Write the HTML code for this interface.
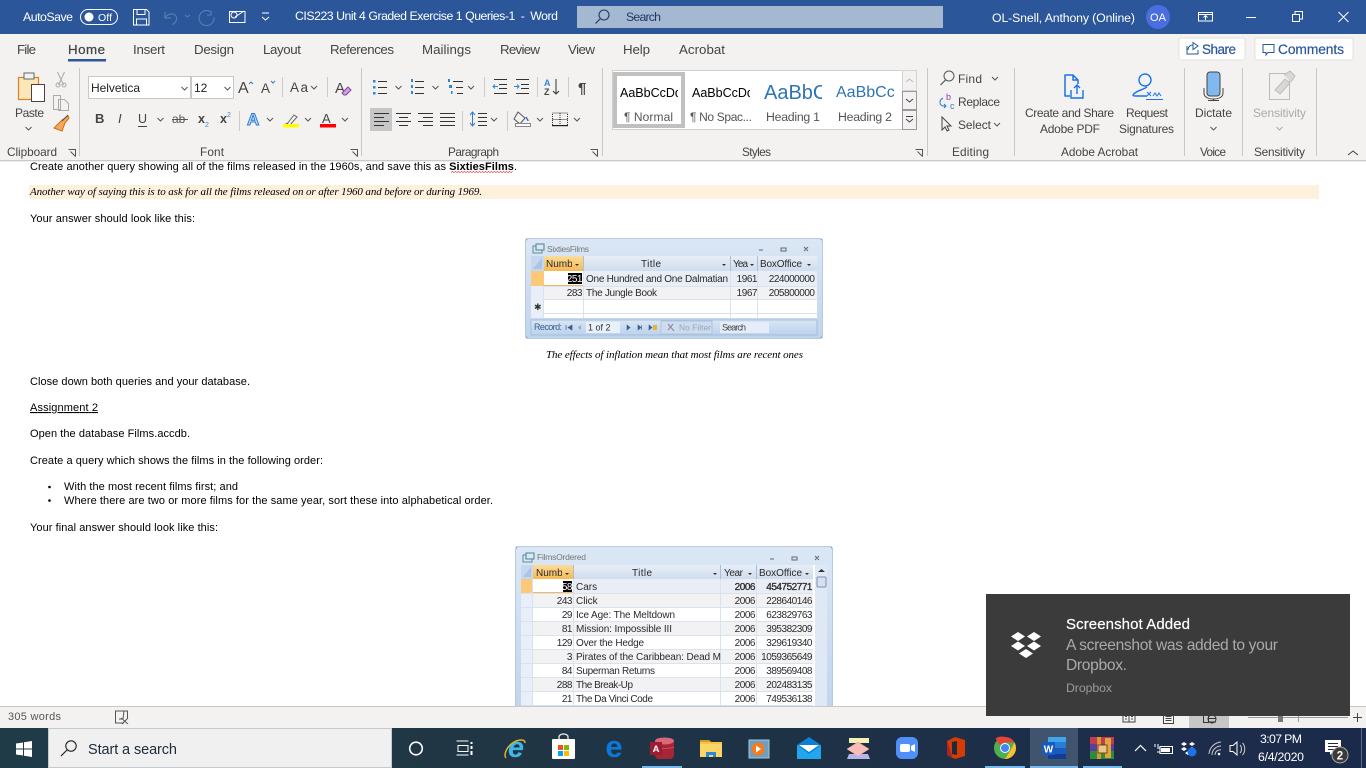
<!DOCTYPE html>
<html lang="en"><head><meta charset="utf-8"><title>CIS223 Unit 4 Graded Exercise 1 Queries-1 - Word</title>
<style>
html,body{margin:0;padding:0;background:#fff;width:1366px;height:768px;overflow:hidden}
svg{display:block;position:absolute;left:0;top:0}
text{font-family:"Liberation Sans",sans-serif;white-space:pre}
.t{font-size:12.3px;fill:#fff}
.tab{font-size:13.3px;fill:#444}
.r{font-size:12px;fill:#444}
.g{font-size:11.8px;fill:#444}
.d{font-size:11px;fill:#000}
.s{font-family:"Liberation Serif",serif;font-style:italic;font-size:11px;fill:#000}
.n{letter-spacing:-.48px}
.ico{fill:none;stroke:#555;stroke-width:1}
.ch{fill:none;stroke:#555;stroke-width:1}
.w{fill:none;stroke:#fff;stroke-width:1}
.b{fill:none;stroke:#333;stroke-width:1}
</style></head><body>
<svg width="1366" height="768" viewBox="0 0 1366 768" xmlns="http://www.w3.org/2000/svg">
<defs>
<linearGradient id="tb" x1="0" x2="1" y1="0" y2="0"><stop offset="0" stop-color="#1f3b48"/><stop offset=".35" stop-color="#203644"/><stop offset="1" stop-color="#1b2a4b"/></linearGradient>
<linearGradient id="hd" x1="0" x2="0" y1="0" y2="1"><stop offset="0" stop-color="#e7eef8"/><stop offset="1" stop-color="#cfdcec"/></linearGradient>
<linearGradient id="or" x1="0" x2="0" y1="0" y2="1"><stop offset="0" stop-color="#fcdc9a"/><stop offset="1" stop-color="#f5b955"/></linearGradient>
<linearGradient id="win" x1="0" x2="0" y1="0" y2="1"><stop offset="0" stop-color="#dbe7f5"/><stop offset="1" stop-color="#bfd4ec"/></linearGradient>
<linearGradient id="nav" x1="0" x2="0" y1="0" y2="1"><stop offset="0" stop-color="#d9e6f5"/><stop offset="1" stop-color="#bcd2ec"/></linearGradient>
<filter id="bl" x="0" y="0" width="100%" height="100%"><feGaussianBlur stdDeviation="0.35"/></filter>
<clipPath id="cs1"><rect x="764" y="76" width="58" height="30"/></clipPath>
<clipPath id="cs2"><rect x="836" y="76" width="58" height="30"/></clipPath>
<clipPath id="cs0"><rect x="620" y="80" width="58" height="24"/></clipPath>
<clipPath id="cs3"><rect x="692" y="80" width="58" height="24"/></clipPath>
<clipPath id="cn1"><rect x="544" y="256" width="28" height="15"/></clipPath>
<clipPath id="cn2"><rect x="533" y="565" width="29" height="14"/></clipPath>
</defs>

<!-- document -->
<rect width="1366" height="768" fill="#fff"/>
<text class="d" x="30" y="170" textLength="487">Create another query showing all of the films released in the 1960s, and save this as <tspan font-weight="bold">SixtiesFilms</tspan>.</text>
<path d="M451 172.500l1.500-1 1.500 1 1.500-1 1.500 1 1.500-1 1.500 1 1.500-1 1.500 1 1.500-1 1.500 1 1.500-1 1.500 1 1.500-1 1.500 1 1.500-1 1.500 1 1.500-1 1.500 1 1.500-1 1.500 1 1.500-1 1.500 1 1.500-1 1.500 1 1.500-1 1.500 1 1.500-1 1.500 1 1.500-1 1.500 1 1.500-1 1.500 1 1.500-1 1.500 1 1.500-1 1.500 1 1.500-1 1.500 1 1.500-1 1.500 1 1.500-1" fill="none" stroke="#d03030" stroke-width=".7"/>
<rect x="29" y="185" width="1290" height="14" fill="#fdf1dd"/>
<text class="s" x="30" y="195" textLength="452">Another way of saying this is to ask for all the films released on or after 1960 and before or during 1969.</text>
<text class="d" x="30" y="222" textLength="165">Your answer should look like this:</text>
<text class="s" x="546" y="358" textLength="257">The effects of inflation mean that most films are recent ones</text>
<text class="d" x="30" y="385" textLength="220">Close down both queries and your database.</text>
<text class="d" x="30" y="411" textLength="68" text-decoration="underline">Assignment 2</text>
<text class="d" x="30" y="437" textLength="160">Open the database Films.accdb.</text>
<text class="d" x="30" y="464" textLength="293">Create a query which shows the films in the following order:</text>
<circle cx="49.500" cy="487" r="1.300" fill="#000"/><circle cx="49.500" cy="500.500" r="1.300" fill="#000"/>
<text class="d" x="64" y="490" textLength="174">With the most recent films first; and</text>
<text class="d" x="64" y="504" textLength="429">Where there are two or more films for the same year, sort these into alphabetical order.</text>
<text class="d" x="30" y="531" textLength="188">Your final answer should look like this:</text>

<!-- image 1 -->
<g filter="url(#bl)">
<rect x="525.500" y="238.500" width="297" height="100" rx="3" fill="url(#win)" stroke="#6f94bd"/>
<rect x="533" y="246" width="9" height="7" fill="none" stroke="#5d8a9c"/><rect x="536" y="244" width="8" height="6" fill="#d6eaf2" stroke="#4d7f92"/>
<text x="547" y="252" font-size="8.500" fill="#777" textLength="42">SixtiesFilms</text>
<path d="M759 250h4M781 248h5v3h-5zM804 247l4 4m0-4l-4 4" stroke="#666" fill="none"/>
<rect x="531" y="256" width="286" height="62" fill="#fff"/>
<rect x="531" y="256" width="13" height="15" fill="#c5d8ef"/><path d="M533 269l9-11v11z" fill="#a9c4e6"/>
<rect x="544" y="256" width="39" height="15" fill="url(#or)"/>
<rect x="583" y="256" width="234" height="15" fill="url(#hd)"/>
<path d="M583.500 256v15M730.500 256v15M757.500 256v15" stroke="#aebfd5"/>
<rect x="531" y="271" width="286" height="15" fill="#e9edf6"/>
<rect x="531" y="271" width="13" height="15" fill="#fcc979"/>
<rect x="544" y="271" width="39" height="15" fill="#fff"/><path d="M544 285.500h39" stroke="#f4b860"/>
<rect x="568" y="273" width="14" height="11" fill="#000"/>
<rect x="531" y="286" width="286" height="13" fill="#f2f2f2"/><rect x="531" y="286" width="13" height="32" fill="#e8eff9"/>
<path d="M544 299.500h273M544 313.500h273M544 286.500h273M543.500 286v32M583.500 271v47M730.500 271v47M757.500 271v47" stroke="#d8e3f0"/>
<g font-size="10" fill="#2a2a2a">
<text x="546" y="267" clip-path="url(#cn1)">Numb</text><path d="M575 264h4l-2 2z" fill="#333"/>
<text x="641" y="267" textLength="20">Title</text><path d="M722 264h4l-2 2z" fill="#333"/>
<text x="733" y="267" textLength="15">Yea</text><path d="M750 264h4l-2 2z" fill="#333"/>
<text x="760" y="267" textLength="42">BoxOffice</text><path d="M807 264h4l-2 2z" fill="#333"/>
<text class="n" x="582" y="282" fill="#fff" text-anchor="end">251</text>
<text x="586" y="282" textLength="142">One Hundred and One Dalmatian</text>
<text class="n" x="757" y="282" text-anchor="end">1961</text><text class="n" x="814.500" y="282" text-anchor="end">224000000</text>
<text class="n" x="582" y="296" text-anchor="end">283</text>
<text x="586" y="296" textLength="71">The Jungle Book</text>
<text class="n" x="757" y="296" text-anchor="end">1967</text><text class="n" x="814.500" y="296" text-anchor="end">205800000</text>
<text x="534" y="310" font-size="9" fill="#333">&#10033;</text>
</g>
<rect x="531" y="320" width="286" height="15" fill="url(#nav)" stroke="#a5bedc"/>
<text x="534" y="330" font-size="9" fill="#38608f" textLength="28">Record:</text>
<path d="M566 325v5M572 325l-4 2.500 4 2.500z" fill="#38608f" stroke="#38608f" stroke-width=".7"/><path d="M581 325l-3 2.500 3 2.500z" fill="#9ab"/>
<rect x="586" y="322" width="34" height="11" fill="#e8f0fa"/><text x="588" y="330.500" font-size="9" fill="#333">1 of 2</text>
<path d="M627 325l3 2.500-3 2.500zM638 325l3 2.500-3 2.500zM641.500 325v5M649 325l3 2.500-3 2.500z" fill="#38608f" stroke="#38608f" stroke-width=".6"/><rect x="653" y="325" width="4" height="5" fill="#e8b33c"/>
<rect x="661" y="321" width="51" height="13" fill="#cddcef" stroke="#aec3dc"/><text x="679" y="330.500" font-size="8.500" fill="#9aa6b5" textLength="32">No Filter</text>
<path d="M668 324l6 7M673 324l-5 6" stroke="#889" fill="none"/>
<rect x="720" y="322" width="49" height="11" fill="#e4edf8"/><text x="722" y="330.500" font-size="9" fill="#444" textLength="24">Search</text>
</g>

<!-- image 2 -->
<g filter="url(#bl)">
<rect x="515.500" y="546.500" width="317" height="170" rx="3" fill="url(#win)" stroke="#6f94bd"/>
<rect x="523" y="555" width="9" height="7" fill="none" stroke="#5d8a9c"/><rect x="526" y="553" width="8" height="6" fill="#d6eaf2" stroke="#4d7f92"/>
<text x="537" y="560" font-size="8.500" fill="#777" textLength="49">FilmsOrdered</text>
<path d="M770 559h4M792 557h5v3h-5zM815 556l4 4m0-4l-4 4" stroke="#666" fill="none"/>
<rect x="521" y="565" width="306" height="142" fill="#fff"/>
<rect x="521" y="565" width="12" height="14" fill="#c5d8ef"/><path d="M523 577l8-10v10z" fill="#a9c4e6"/>
<rect x="533" y="565" width="40" height="14" fill="url(#or)"/>
<rect x="573" y="565" width="240" height="14" fill="url(#hd)"/>
<path d="M573.500 565v14M720.500 565v14M756.500 565v14" stroke="#aebfd5"/>
<rect x="521" y="579" width="292" height="14" fill="#e9edf6"/>
<rect x="521" y="593" width="292" height="14" fill="#f2f2f2"/>
<rect x="521" y="621" width="292" height="14" fill="#f2f2f2"/>
<rect x="521" y="649" width="292" height="14" fill="#f2f2f2"/>
<rect x="521" y="677" width="292" height="14" fill="#f2f2f2"/>
<rect x="521" y="593" width="12" height="114" fill="#e8eff9"/>
<rect x="521" y="579" width="12" height="14" fill="#fcc979"/>
<rect x="533" y="579" width="40" height="14" fill="#fff"/><path d="M533 592.500h40" stroke="#f4b860"/>
<rect x="563" y="581" width="9" height="11" fill="#000"/>
<path d="M521 593.500h292M521 607.500h292M521 621.500h292M521 635.500h292M521 649.500h292M521 663.500h292M521 677.500h292M521 691.500h292M521 705.500h292M532.500 579v128M573.500 579v128M720.500 579v128M756.500 579v128" stroke="#d8e3f0"/>
<rect x="815" y="565" width="12" height="142" fill="#dfe9f6"/>
<path d="M818 572h7l-3.500-3z" fill="#333"/><rect x="817" y="577" width="9" height="10" rx="1" fill="#d5e1f0" stroke="#7e93ad"/>
<g font-size="10" fill="#2a2a2a">
<text x="536" y="576" clip-path="url(#cn2)">Numb</text><path d="M565 573h4l-2 2z" fill="#333"/>
<text x="632" y="576" textLength="20">Title</text><path d="M713 573h4l-2 2z" fill="#333"/>
<text x="724" y="576" textLength="19">Year</text><path d="M748 573h4l-2 2z" fill="#333"/>
<text x="759" y="576" textLength="43">BoxOffice</text><path d="M805 573h4l-2 2z" fill="#333"/>
<text class="n" x="572" y="590" text-anchor="end" fill="#fff">58</text><text x="576" y="590">Cars</text><text class="n" x="755" y="590" text-anchor="end" stroke="#2a2a2a" stroke-width=".3">2006</text><text class="n" x="812" y="590" text-anchor="end" stroke="#2a2a2a" stroke-width=".3">454752771</text>
<text class="n" x="572" y="604" text-anchor="end">243</text><text x="576" y="604">Click</text><text class="n" x="755" y="604" text-anchor="end">2006</text><text class="n" x="812" y="604" text-anchor="end">228640146</text>
<text class="n" x="572" y="618" text-anchor="end">29</text><text x="576" y="618" textLength="99">Ice Age: The Meltdown</text><text class="n" x="755" y="618" text-anchor="end">2006</text><text class="n" x="812" y="618" text-anchor="end">623829763</text>
<text class="n" x="572" y="632" text-anchor="end">81</text><text x="576" y="632" textLength="96">Mission: Impossible III</text><text class="n" x="755" y="632" text-anchor="end">2006</text><text class="n" x="812" y="632" text-anchor="end">395382309</text>
<text class="n" x="572" y="646" text-anchor="end">129</text><text x="576" y="646" textLength="68">Over the Hedge</text><text class="n" x="755" y="646" text-anchor="end">2006</text><text class="n" x="812" y="646" text-anchor="end">329619340</text>
<text class="n" x="572" y="660" text-anchor="end">3</text><text x="576" y="660" textLength="145">Pirates of the Caribbean: Dead M</text><text class="n" x="755" y="660" text-anchor="end">2006</text><text class="n" x="812" y="660" text-anchor="end">1059365649</text>
<text class="n" x="572" y="674" text-anchor="end">84</text><text x="576" y="674" textLength="79">Superman Returns</text><text class="n" x="755" y="674" text-anchor="end">2006</text><text class="n" x="812" y="674" text-anchor="end">389569408</text>
<text class="n" x="572" y="688" text-anchor="end">288</text><text x="576" y="688" textLength="57">The Break-Up</text><text class="n" x="755" y="688" text-anchor="end">2006</text><text class="n" x="812" y="688" text-anchor="end">202483135</text>
<text class="n" x="572" y="702" text-anchor="end">21</text><text x="576" y="702" textLength="77">The Da Vinci Code</text><text class="n" x="755" y="702" text-anchor="end">2006</text><text class="n" x="812" y="702" text-anchor="end">749536138</text>
</g>
</g>

<!-- title bar -->
<rect width="1366" height="34" fill="#2b579a"/>
<text class="t" x="23" y="21" textLength="50">AutoSave</text>
<rect x="80.500" y="9.500" width="37" height="15" rx="7.500" fill="none" stroke="#fff"/><circle cx="89" cy="17" r="4.500" fill="#fff"/>
<text x="98" y="21" font-size="10.500" fill="#fff" textLength="14">Off</text>
<path class="w" d="M133.500 9.500h13l2.500 2.500v13h-15.500zM137 9.500v5h8v-5M136.500 25v-6h10v6"/>
<g stroke="#5f81b3" fill="none"><path d="M165 12v6h6M165.500 17.500c3-5 11-5 11 1 0 3-2 5-4 6"/><path d="M185 15l2.500 2 2.500-2"/><path d="M211 11v4h-4M214 17a7.500 7.500 0 1 1-3-5"/></g>
<path class="w" d="M229.500 11.500h15.500v11h-15.500zM235 17l9-6"/><circle cx="234" cy="15" r="3" class="w"/>
<path d="M262 13h7M262 17l3.500 3 3.500-3" class="w"/>
<text class="t" x="295" y="20" textLength="263">CIS223 Unit 4 Graded Exercise 1 Queries-1  -  Word</text>
<rect x="577" y="6" width="366" height="22" fill="#a5b8d2"/>
<circle cx="604" cy="15" r="5" fill="none" stroke="#1f3a68" stroke-width="1.100"/><path d="M600 19l-4.500 4.500" stroke="#1f3a68" stroke-width="1.200"/>
<text x="626" y="21" font-size="12.300" fill="#1f3a68" textLength="35">Search</text>
<text class="t" x="992" y="22" textLength="143">OL-Snell, Anthony (Online)</text>
<circle cx="1158" cy="17" r="12" fill="#4a6ee0"/><text x="1158" y="21" font-size="11" fill="#fff" text-anchor="middle">OA</text>
<path class="w" d="M1198.500 12.500h14v8.500h-14zM1198.500 14.500h14M1205.500 20v-4M1203.500 17.500l2-2 2 2"/>
<path class="w" d="M1246 17.500h10M1292.500 14.500h7v7h-7zM1295 14v-2.500h7.500v7.500h-3M1338.500 12l10 10m0-10l-10 10"/>

<!-- ribbon -->
<rect y="34" width="1366" height="126" fill="#f3f2f1"/>
<rect y="160" width="1366" height="1" fill="#c9c9c9"/><rect y="161" width="1366" height="1" fill="#000" fill-opacity=".07"/>
<text class="tab" x="17" y="54" textLength="19">File</text>
<text class="tab" x="68" y="54" textLength="37" stroke="#444" stroke-width=".25">Home</text>
<text class="tab" x="133" y="54" textLength="32">Insert</text>
<text class="tab" x="194" y="54" textLength="40">Design</text>
<text class="tab" x="263" y="54" textLength="38">Layout</text>
<text class="tab" x="330" y="54" textLength="64">References</text>
<text class="tab" x="422" y="54" textLength="49">Mailings</text>
<text class="tab" x="500" y="54" textLength="40">Review</text>
<text class="tab" x="568" y="54" textLength="27">View</text>
<text class="tab" x="623" y="54" textLength="27">Help</text>
<text class="tab" x="679" y="54" textLength="46">Acrobat</text>
<rect x="68" y="59" width="38" height="2.500" fill="#2b579a"/>
<rect x="1179" y="38" width="66" height="22" rx="2" fill="#fff" stroke="#e1e1e1"/>
<rect x="1255" y="38" width="98" height="22" rx="2" fill="#fff" stroke="#e1e1e1"/>
<path d="M1187 46v8h11v-4M1193 45c-3 0-5 2-5 5M1193 42.500l5 3.500-5 3.500z" fill="none" stroke="#2b579a"/>
<text x="1202" y="54" font-size="13.500" fill="#2b579a" textLength="34" stroke="#2b579a" stroke-width=".2">Share</text>
<path d="M1263 44.500h11v8h-6l-2 2.500v-2.500h-3z" fill="none" stroke="#2b579a"/>
<text x="1278" y="54" font-size="13.800" fill="#2b579a" textLength="66" stroke="#2b579a" stroke-width=".2">Comments</text>

<path d="M79.500 68v88M361.500 68v88M602.500 68v88M927.500 68v88M1014.500 68v88M1184.500 68v88M1242.500 68v88M1316.500 68v88" stroke="#c8c8c8"/>
<text class="g" x="7" y="156" textLength="50">Clipboard</text>
<text class="g" x="200" y="156" textLength="24">Font</text>
<text class="g" x="448" y="156" textLength="51">Paragraph</text>
<text class="g" x="742" y="156" textLength="29">Styles</text>
<text class="g" x="952" y="156" textLength="37">Editing</text>
<text class="g" x="1061" y="156" textLength="77">Adobe Acrobat</text>
<text class="g" x="1200" y="156" textLength="26">Voice</text>
<text class="g" x="1254" y="156" textLength="51">Sensitivity</text>
<path class="ico" d="M68.500 149.500h7v7M70.500 151.500l5 5M350.500 149.500h7v7M352.500 151.500l5 5M590.500 149.500h7v7M592.500 151.500l5 5M915.500 149.500h7v7M917.500 151.500l5 5"/>

<!-- clipboard -->
<rect x="18.500" y="77.500" width="20" height="22" fill="#fbe6b8" stroke="#d98324" stroke-width="1.200"/>
<rect x="24" y="73" width="10" height="6" fill="#f3f2f1" stroke="#666"/>
<rect x="31.500" y="84.500" width="13" height="17" fill="#fff" stroke="#444"/>
<text class="r" x="15" y="117" textLength="29">Paste</text>
<path class="ch" d="M25.500 127l3 3 3-3"/>
<path d="M57.500 72l6 13M64.500 72l-6 13" stroke="#aaa" fill="none"/><circle cx="58" cy="85" r="2" fill="none" stroke="#aaa"/><circle cx="64" cy="85" r="2" fill="none" stroke="#aaa"/>
<path d="M53.500 95.500h7l0 14h-7zM58.500 99.500h6l4 4v7h-10z" fill="#f3f2f1" stroke="#aaa"/>
<path d="M62 120l6-4 1 2-4 5-3 8-8-3z" fill="#f6a75c" stroke="#d46a10"/><path d="M62 121l6-6" stroke="#555"/>

<!-- font -->
<rect x="88.500" y="76.500" width="102" height="22" fill="#fff" stroke="#c8c8c8"/>
<rect x="191.500" y="76.500" width="42" height="22" fill="#fff" stroke="#c8c8c8"/>
<text x="91" y="92" font-size="12" fill="#222" textLength="49">Helvetica</text>
<text x="194" y="92" font-size="12" fill="#222">12</text>
<path class="ch" d="M181.500 87l3 3 3-3M224.500 87l3 3 3-3"/>
<text x="238" y="93" font-size="16" fill="#444">A</text><path d="M249 84l2-2 2 2" stroke="#2b7cd3" fill="none"/>
<text x="261" y="93" font-size="13.500" fill="#444">A</text><path d="M271 81l2 2 2-2" stroke="#2b7cd3" fill="none"/>
<path d="M282.500 77v20M327.500 77v20" stroke="#ccc"/>
<text x="290" y="92" font-size="13.500" fill="#444" textLength="18">Aa</text><path class="ch" d="M311 86l3 3 3-3"/>
<text x="335" y="93" font-size="15" fill="#444">A</text><path d="M342 93l6-6 3 3-5 5h-2z" fill="#c9a3db" stroke="#8e3ea8"/>
<text x="95" y="123" font-size="13" font-weight="bold" fill="#444">B</text>
<text x="118" y="123" font-size="13" font-style="italic" fill="#444" font-family="Liberation Serif">I</text>
<text x="138" y="123" font-size="12.500" fill="#444">U</text><path d="M138 126.500h9" stroke="#444"/>
<path class="ch" d="M157.500 118l3 3 3-3"/>
<text x="172" y="123" font-size="12" fill="#555">ab</text><path d="M172 119.500h16" stroke="#555"/>
<text x="198" y="123" font-size="12.500" font-weight="bold" fill="#444">x</text><text x="205" y="127" font-size="7" fill="#2b88d8">2</text>
<text x="220" y="123" font-size="12.500" font-weight="bold" fill="#444">x</text><text x="227" y="117" font-size="7" fill="#2b88d8">2</text>
<path d="M239.500 111v20" stroke="#ccc"/>
<text x="247" y="125" font-size="17" font-weight="bold" fill="#bfe0f7" stroke="#2b7cd3" stroke-width="1">A</text>
<path class="ch" d="M267 118l3 3 3-3"/>
<path d="M287 124l7-9 3 2-7 8zM285 125l2-2" fill="none" stroke="#666"/><rect x="283" y="124" width="16" height="3.500" fill="#ffff00"/>
<path class="ch" d="M305 118l3 3 3-3"/>
<text x="322" y="123" font-size="13" fill="#444">A</text><rect x="320" y="124" width="16" height="3.500" fill="#f00"/>
<path class="ch" d="M342 118l3 3 3-3"/>

<!-- paragraph -->
<g fill="#2b88d8"><rect x="373" y="80" width="2.500" height="2.500"/><rect x="373" y="86" width="2.500" height="2.500"/><rect x="373" y="92" width="2.500" height="2.500"/>
<rect x="411" y="79" width="2" height="3"/><rect x="411" y="85" width="2" height="3"/><rect x="411" y="91" width="2" height="3"/>
<rect x="448" y="79" width="2" height="3"/><rect x="449" y="85" width="3" height="3"/><rect x="451" y="91" width="1.500" height="3"/></g>
<path class="b" d="M378 81.500h9M378 87.500h9M378 93.500h9M415 81.500h9M415 87.500h9M415 93.500h9M453 81.500h10M456 87.500h7M457 93.500h6"/>
<path class="ch" d="M395.500 86l3 3 3-3M432.500 86l3 3 3-3M468 86l3 3 3-3"/>
<path d="M484.500 77v20M537.500 77v20M568.500 77v20" stroke="#ccc"/>
<path class="b" d="M494 79.500h13M499 84.500h8M499 88.500h8M494 93.500h13M516 79.500h13M521 84.500h8M521 88.500h8M516 93.500h13"/>
<path d="M498 86.500h-5m2-2l-2 2 2 2M514 86.500h5m-2-2l2 2-2 2" fill="none" stroke="#2b88d8"/>
<text x="544" y="86" font-size="9" font-weight="bold" fill="#2b88d8">A</text><text x="544" y="95" font-size="9" font-weight="bold" fill="#444">Z</text>
<path class="b" d="M556 79v15M553 91l3 3 3-3"/>
<text x="578" y="93" font-size="15" font-weight="bold" fill="#444">&#182;</text>
<rect x="370" y="108" width="22" height="23" fill="#c6c6c6"/>
<path class="b" d="M374 113.500h15M374 117.500h10M374 121.500h15M374 125.500h10M396 113.500h15M399 117.500h9M396 121.500h15M399 125.500h9M418 113.500h15M423 117.500h10M418 121.500h15M423 125.500h10M440 113.500h15M440 117.500h15M440 121.500h15M440 125.500h15"/>
<path d="M462.500 111v20M507.500 111v20" stroke="#ccc"/>
<path d="M472.500 113v12M470 115l2.500-3 2.500 3M470 123l2.500 3 2.500-3" fill="none" stroke="#2b7cd3"/>
<path class="b" d="M478 113.500h9M478 117.500h9M478 121.500h9M478 125.500h9"/><path class="ch" d="M491 118l3 3 3-3"/>
<path d="M518 112l7 6-5 6-6-5z" fill="none" stroke="#555"/><path d="M526 117c1 2 2 3 2 4" stroke="#2b7cd3" stroke-width="1.500" fill="none"/><rect x="515.500" y="123.500" width="15" height="3" fill="#fff" stroke="#888"/>
<path class="ch" d="M537 118l3 3 3-3"/>
<path d="M552.500 113h15v13h-15zM560 113v13M552.500 119.500h15" fill="none" stroke="#333" stroke-dasharray="1 1"/><path d="M552 125.500h16" stroke="#222"/>
<path class="ch" d="M574 118l3 3 3-3"/>

<!-- styles -->
<rect x="612.500" y="70.500" width="304" height="59" fill="#fff" stroke="#cfcfcf"/>
<rect x="615" y="74" width="68" height="52" fill="#fff" stroke="#c0c0c0" stroke-width="4"/>
<text clip-path="url(#cs0)" x="620" y="97" font-size="12.500" fill="#000">AaBbCcDd</text>
<text x="624" y="121" font-size="12" fill="#555" textLength="49">&#182; Normal</text>
<text clip-path="url(#cs3)" x="692" y="97" font-size="12.500" fill="#000">AaBbCcDd</text>
<text x="690" y="121" font-size="12" fill="#555" textLength="62">&#182; No Spac...</text>
<text clip-path="url(#cs1)" x="764" y="99" font-size="20" fill="#2e74b5">AaBbCc</text>
<text x="766" y="121" font-size="12.300" fill="#555" textLength="54">Heading 1</text>
<text clip-path="url(#cs2)" x="836" y="97" font-size="16" fill="#2e74b5">AaBbCcD</text>
<text x="838" y="121" font-size="12.300" fill="#555" textLength="54">Heading 2</text>
<rect x="902.500" y="70.500" width="14" height="20" fill="#f3f2f1" stroke="#d4d4d4"/>
<rect x="902.500" y="91.500" width="14" height="18" fill="#f3f2f1" stroke="#999"/>
<rect x="902.500" y="110.500" width="14" height="19" fill="#f3f2f1" stroke="#999"/>
<path d="M906 82l3.500-3 3.500 3" fill="none" stroke="#bbb"/><path d="M906 99l3.500 3 3.500-3" fill="none" stroke="#444"/><path d="M906 116.500h7M906 119l3.500 3 3.500-3" fill="none" stroke="#444"/>

<!-- editing -->
<circle cx="949" cy="76" r="5" fill="none" stroke="#555"/><path d="M945.500 80l-5 5" stroke="#555" stroke-width="1.200"/>
<text class="r" x="958" y="83" textLength="24">Find</text><path class="ch" d="M992 77l3 3 3-3"/>
<text x="946" y="100" font-size="9" fill="#8e3ea8">b</text><text x="950" y="109" font-size="9" fill="#2b7cd3">c</text><path d="M943 98c-4 2-4 7 0 8l3 0m-2-2l2 2-2 2" fill="none" stroke="#2b7cd3"/>
<text class="r" x="958" y="106" textLength="42">Replace</text>
<path d="M942 117v13l3-3 2 4 2-1-2-4h4z" fill="#f3f2f1" stroke="#444"/>
<text class="r" x="958" y="129" textLength="33">Select</text><path class="ch" d="M994 123l3 3 3-3"/>

<!-- acrobat -->
<path d="M1065 91v-16h8l5 5v4M1065 91v5h5M1073 75v5h5" fill="none" stroke="#1a73e8" stroke-width="1.500" stroke-linejoin="round"/>
<path d="M1071 90v8h12v-8M1077 94v-9M1074 88l3-3 3 3" fill="none" stroke="#1a73e8" stroke-width="1.400"/>
<circle cx="1145" cy="80" r="6" fill="none" stroke="#1a73e8" stroke-width="1.400"/><path d="M1147 87c-4 3-12 4-14 8 0 1 1 1 3 1h11" fill="none" stroke="#1a73e8" stroke-width="1.400"/>
<path d="M1146 99.500h17M1147 92l4 4m0-4l-4 4M1153 96l2-3 2 3 2-3 2 3" fill="none" stroke="#1a73e8"/>
<text class="r" x="1025" y="117" textLength="89">Create and Share</text>
<text class="r" x="1040" y="133" textLength="60">Adobe PDF</text>
<text class="r" x="1126" y="117" textLength="42">Request</text>
<text class="r" x="1119" y="133" textLength="55">Signatures</text>

<!-- voice -->
<rect x="1207" y="72" width="13" height="24" rx="3" fill="#7fb9ee" stroke="#444"/>
<path d="M1204 88v5c0 4 4 6 9.500 6s9.500-2 9.500-6v-5M1213.500 99v2M1208 100.500h11" fill="none" stroke="#444"/>
<text class="r" x="1195" y="117" textLength="37">Dictate</text><path class="ch" d="M1210.500 127l3 3 3-3"/>
<!-- sensitivity -->
<rect x="1269.500" y="73.500" width="20" height="26" fill="none" stroke="#bbb"/>
<path d="M1275 90l10-11 5 4-10 11zM1284 75l6-4 5 5-4 6" fill="#d8d8d8" stroke="#bbb"/>
<text x="1253" y="117" font-size="12" fill="#aaa" textLength="53">Sensitivity</text><path d="M1276.500 127l3 3 3-3" fill="none" stroke="#aaa"/>
<path d="M1348 155l5-4 5 4" fill="none" stroke="#444"/>

<!-- status bar -->
<rect y="706" width="1366" height="22" fill="#f3f2f1"/><rect y="706" width="1366" height="1" fill="#c8c8c8"/>
<text x="8" y="720" font-size="11" fill="#555" textLength="53">305 words</text>
<path d="M124 723h-8.500v-12h12v7M124 711l-1 8h-4M121 718l7 6m0-6l-6 6" fill="none" stroke="#555"/>
<path d="M1123 714h12v8h-12zM1129 714v8M1125 716.500h2M1131 716.500h2M1125 719h2M1131 719h2" fill="none" stroke="#444"/>
<path d="M1163.500 713.500h10v10h-10zM1165.500 716.500h6M1165.500 718.500h6M1165.500 720.500h6" fill="none" stroke="#444"/>
<rect x="1189" y="706" width="40" height="22" fill="#c6c6c6"/>
<path d="M1203.500 714.500h5v8h-5zM1209 715h7M1209 718.500h7M1209 722h7" fill="none" stroke="#333"/><circle cx="1212" cy="719" r="4" fill="none" stroke="#333"/>
<path d="M1248 717.500h100" stroke="#9c9c9c"/><rect x="1278" y="716" width="5" height="6" fill="#777"/><path d="M1298.500 716v6" stroke="#9c9c9c"/>
<path d="M1353 717.500h9M1357.500 713v9" stroke="#444"/>

<!-- taskbar -->
<rect y="728" width="1366" height="40" fill="url(#tb)"/>
<path d="M16 743.500l7-1v6h-7zM24 742.300l8-1.300v7.500h-8zM16 749.500h7v6l-7-1zM24 749.500h8v7.500l-8-1.300z" fill="#fff"/>
<rect x="48.500" y="728.500" width="343" height="39" fill="#f0f0f0" stroke="#c4c9cc"/>
<circle cx="71" cy="746" r="5.200" fill="none" stroke="#222" stroke-width="1.100"/><path d="M67 750l-6 6" stroke="#222" stroke-width="1.200"/>
<text x="88" y="754" font-size="14.500" fill="#1d2b3a" textLength="89">Start a search</text>
<circle cx="416" cy="748.500" r="6.300" fill="none" stroke="#fff" stroke-width="1.600"/>
<path class="w" d="M456.500 741h12M456.500 755h12M458 745.500h10v6h-10z"/><path d="M471.500 742v2m0 2v3m0 2v4" stroke="#fff" stroke-width="2"/>
<!-- IE -->
<text x="516" y="757" font-size="29" font-family="Liberation Serif" font-style="italic" font-weight="bold" fill="#3eb6ea" text-anchor="middle" style="font-family:'Liberation Sans'">e</text>
<path d="M506 758c-3-3 1-13 10-17 6-2 9-1 9 2" fill="none" stroke="#e3b02a" stroke-width="1.500"/>
<!-- store -->
<rect x="552" y="739" width="23" height="20" rx="1" fill="#fff"/><path d="M559 739v-2c0-4 9-4 9 0v2" fill="none" stroke="#ddd" stroke-width="1.400"/>
<rect x="558" y="745" width="5" height="5" fill="#f25022"/><rect x="564" y="745" width="5" height="5" fill="#7fba00"/><rect x="558" y="751" width="5" height="5" fill="#00a4ef"/><rect x="564" y="751" width="5" height="5" fill="#ffb900"/>
<!-- edge -->
<text x="614" y="757" font-size="31" font-weight="bold" fill="#0c78d8" text-anchor="middle">e</text>
<!-- access -->
<rect x="655" y="738" width="19" height="21" rx="4" fill="#a82437"/><ellipse cx="664.500" cy="741" rx="9.500" ry="3.500" fill="#d76a7a"/><path d="M655 747c4 2 15 2 19 0" stroke="#c44a5d" fill="none"/>
<rect x="650" y="742" width="12" height="13" fill="#9e1c30"/><text x="656" y="752" font-size="9.500" font-weight="bold" fill="#fff" text-anchor="middle">A</text>
<!-- explorer -->
<path d="M700 740h9l2 2h11v15h-22z" fill="#f6c544"/><path d="M700 740h9l2 2h-11z" fill="#d59f27"/><rect x="700" y="744" width="22" height="13" fill="#fbd666"/><path d="M706 757v-5h10v5h-3v-2h-4v2z" fill="#2b88d8"/>
<!-- media player -->
<rect x="749" y="740" width="20" height="18" fill="#6e9fbf" stroke="#a5c5d9"/><circle cx="758" cy="749" r="6.500" fill="#f47b20"/><path d="M756 745.500l5 3.500-5 3.500z" fill="#fff"/>
<!-- mail -->
<path d="M797 745l12-8 12 8v14h-24z" fill="#0f7ed8"/><path d="M799 745h20l-10 7z" fill="#fff"/><path d="M797 745l12 9 12-9v14h-24z" fill="#22a6ee"/>
<!-- stack app -->
<path d="M849 738h20v5h-20z" fill="#f6f0b5"/><path d="M847 749l11-7 11 7-11 7z" fill="#f5b5b0" stroke="#e89a95" stroke-width=".5"/><path d="M849 754h19l2 5h-23z" fill="#b7b4e6"/><path d="M858 743l11 6-11 7-11-7z" fill="#f8bdb7"/>
<!-- zoom -->
<rect x="896" y="737" width="22" height="22" rx="6" fill="#4f8ff7"/><rect x="900" y="744" width="10" height="8" rx="2" fill="#fff"/><path d="M911 746l4-2v8l-4-2z" fill="#fff"/>
<!-- office -->
<path d="M955 737l10 3v16l-10 3-8-4v-14z" fill="#d83b01"/><path d="M952 742l5-1v14l-5-1z" fill="#1b2c40"/><path d="M947 741v14l5 3 0-2z" fill="#a4262c"/>
<!-- chrome -->
<circle cx="1005" cy="748" r="11" fill="#4caf50"/><path d="M1005 737a11 11 0 0 1 9.500 5.500h-9.500a5.500 5.500 0 0 0-5 3l-4.500-7a11 11 0 0 1 9.500-1.500z" fill="#ea4335"/><path d="M1014.500 742.500a11 11 0 0 1-9.500 16.500l5-8z" fill="#fbc02d"/><circle cx="1005" cy="748" r="5" fill="#fff"/><circle cx="1005" cy="748" r="4" fill="#4285f4"/>
<!-- word -->
<rect x="1030" y="728" width="48" height="40" fill="#41546e"/>
<rect x="1048" y="737" width="18" height="5" fill="#41a5ee"/><rect x="1048" y="742" width="18" height="6" fill="#2b7cd3"/><rect x="1048" y="748" width="18" height="6" fill="#185abd"/><rect x="1048" y="754" width="18" height="5" fill="#103f91"/>
<rect x="1042" y="742" width="13" height="13" fill="#185abd"/><text x="1048.500" y="752.500" font-size="10" font-weight="bold" fill="#fff" text-anchor="middle">W</text>
<!-- winrar -->
<rect x="1090" y="737" width="24" height="7" fill="#c23b52"/><rect x="1090" y="744" width="24" height="7" fill="#5b3e9e"/><rect x="1090" y="751" width="24" height="8" fill="#2d8a3e"/><rect x="1097" y="737" width="4" height="22" fill="#d79a2b"/><rect x="1105" y="738" width="6" height="20" fill="#e2a43c"/><rect x="1098" y="745" width="9" height="8" fill="#e8c58a" stroke="#7a4a10"/>
<!-- underlines -->
<rect x="642" y="766" width="40" height="2" fill="#76b9ed"/><rect x="985" y="766" width="40" height="2" fill="#76b9ed"/><rect x="1030" y="766" width="48" height="2" fill="#76b9ed"/><rect x="1083" y="766" width="39" height="2" fill="#76b9ed"/>
<!-- tray -->
<path d="M1135 751l5.500-5.500 5.500 5.500" fill="none" stroke="#fff" stroke-width="1.200"/>
<path d="M1160 746.500h12.500v7h-12.500z" fill="none" stroke="#fff"/><rect x="1161" y="748" width="9" height="4" fill="#fff"/><path d="M1157 748h3v4h-3M1155 744v3M1158 744v3" stroke="#fff" fill="none"/>
<path d="M1181 744l3-2 3 2-3 2zM1189 744l3-2 3 2-3 2zM1181 749l3-2 3 2-3 2zM1189 749l3-2 3 2-3 2zM1185 753l3-2 3 2-3 2z" fill="#fff"/><circle cx="1192" cy="752" r="4.500" fill="#1a73e8"/>
<path d="M1209 754a13 13 0 0 1 12-12M1212 755a9 9 0 0 1 9-9M1215 755a5 5 0 0 1 6-5" fill="none" stroke="#ccc"/><circle cx="1219" cy="754" r="1.300" fill="#fff"/>
<path d="M1230 745.500h3l4-3.500v13l-4-3.500h-3z" fill="none" stroke="#fff"/><path d="M1240 745c2 2 2 6 0 8M1242.500 743c3 3 3 9 0 12" fill="none" stroke="#ccc"/>
<text x="1260" y="743" font-size="12.300" fill="#fff" textLength="42">3:07 PM</text>
<text x="1258" y="761" font-size="12.300" fill="#fff" textLength="46">6/4/2020</text>
<path d="M1325 740h16v12h-8l-3 3v-3h-5z" fill="#fff"/><path d="M1328 743.500h10M1328 746.500h10M1328 749.500h6" stroke="#1b2a4b"/>
<circle cx="1340" cy="755" r="8" fill="#3a3a3a" stroke="#aaa"/><text x="1340" y="759.500" font-size="11.500" font-weight="bold" fill="#fff" text-anchor="middle">2</text>
<rect x="1361" y="728" width="1" height="40" fill="#5a6a85"/>

<!-- toast -->
<rect x="986" y="594" width="364" height="122" fill="#3b3b3b"/>
<path d="M1018 632l-7 4.500 7 4.500 7-4.500zM1034 632l-7 4.500 7 4.500 7-4.500zM1018 641.500l-7 4.500 7 4.500 7-4.500zM1034 641.500l-7 4.500 7 4.500 7-4.500zM1026 649l-7 4.500 7 4.500 7-4.500z" fill="#fff"/>
<text x="1066" y="629" font-size="15" fill="#fff" textLength="124" stroke="#fff" stroke-width=".2">Screenshot Added</text>
<text x="1066" y="650" font-size="15.600" fill="#aaa" textLength="212">A screenshot was added to your</text>
<text x="1066" y="670" font-size="15.600" fill="#aaa" textLength="61">Dropbox.</text>
<text x="1066" y="692" font-size="12.300" fill="#9a9a9a" textLength="46">Dropbox</text>
</svg>
</body></html>
